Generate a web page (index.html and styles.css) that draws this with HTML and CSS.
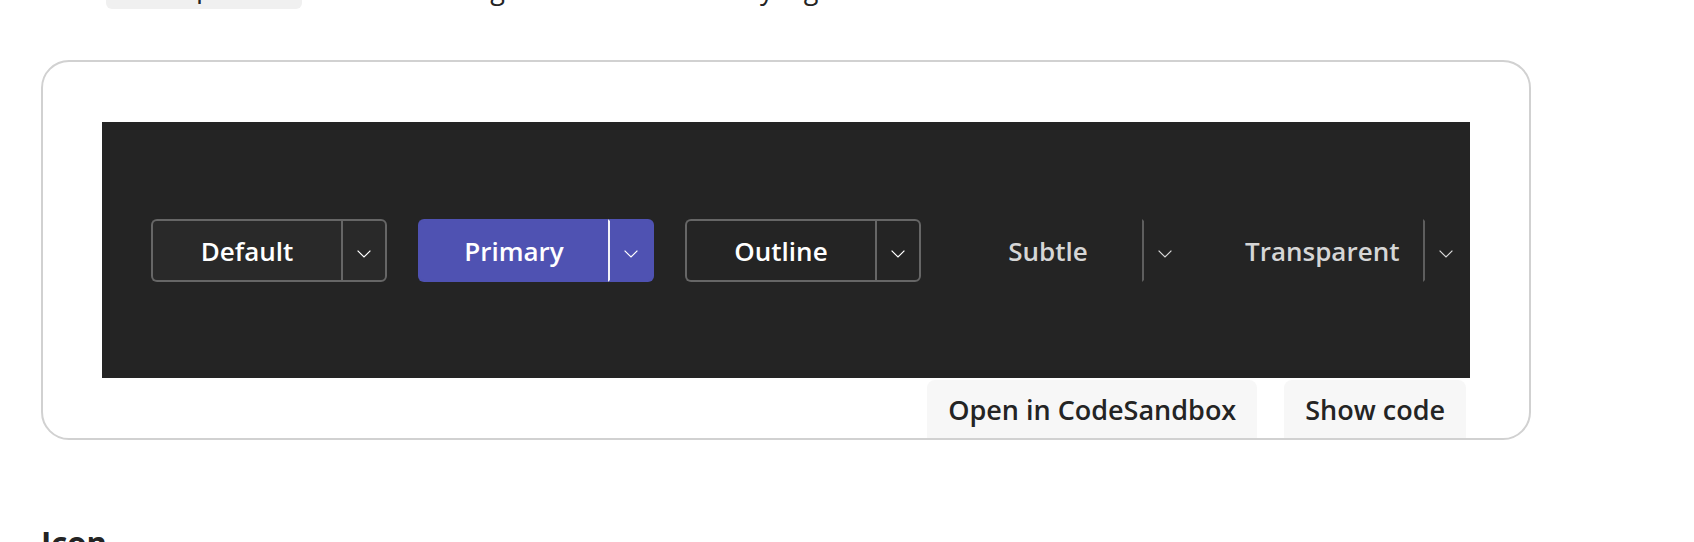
FILE: index.html
```html
<!DOCTYPE html>
<html lang="en">
<head>
<meta charset="utf-8">
<title>Split button appearance</title>
<link rel="stylesheet" href="styles.css">
</head>
<body>
<div class="page">
  <ul class="intro">
    <li><code class="chip">transparent</code>: removes background and border styling.</li>
  </ul>
  <section class="card">
    <div class="preview">
      <div class="row">
        <div class="split split-default">
          <button class="main">Default</button>
          <button class="menu"><svg class="chev" width="14" height="8" viewBox="0 0 14 8"><polyline points="0.6,0.6 7,7 13.4,0.6" fill="none" stroke="currentColor" stroke-width="1.2"/></svg></button>
        </div>
        <div class="split split-primary">
          <button class="main">Primary</button>
          <button class="menu"><svg class="chev" width="14" height="8" viewBox="0 0 14 8"><polyline points="0.6,0.6 7,7 13.4,0.6" fill="none" stroke="currentColor" stroke-width="1.2"/></svg></button>
        </div>
        <div class="split split-outline">
          <button class="main">Outline</button>
          <button class="menu"><svg class="chev" width="14" height="8" viewBox="0 0 14 8"><polyline points="0.6,0.6 7,7 13.4,0.6" fill="none" stroke="currentColor" stroke-width="1.2"/></svg></button>
        </div>
        <div class="split split-subtle">
          <button class="main">Subtle</button>
          <button class="menu"><svg class="chev" width="14" height="8" viewBox="0 0 14 8"><polyline points="0.6,0.6 7,7 13.4,0.6" fill="none" stroke="currentColor" stroke-width="1.2"/></svg></button>
        </div>
        <div class="split split-transparent">
          <button class="main">Transparent</button>
          <button class="menu"><svg class="chev" width="14" height="8" viewBox="0 0 14 8"><polyline points="0.6,0.6 7,7 13.4,0.6" fill="none" stroke="currentColor" stroke-width="1.2"/></svg></button>
        </div>
      </div>
    </div>
    <div class="actions">
      <button class="action">Open in CodeSandbox</button>
      <button class="action">Show code</button>
    </div>
  </section>
  <h2 class="heading">Icon</h2>
</div>
</body>
</html>
```

FILE: styles.css
```css
html, body {
  margin: 0;
  padding: 0;
  background: #ffffff;
}

body {
  font-family: "Open Sans", "Noto Sans", sans-serif;
  color: #242424;
  overflow: hidden;
}

.page {
  display: flow-root;
  padding-left: 41px;
  width: 1490px;
}

.intro {
  margin: -31px 0 0;
  padding: 0 0 0 65px;
  font-size: 27px;
  line-height: 40px;
}

.chip {
  font-family: "Liberation Mono", monospace;
  font-size: 26px;
  line-height: 40px;
  background: #f0f0f0;
  border-radius: 6px;
  padding: 2px 12px;
}

.card {
  box-sizing: border-box;
  margin-top: 48px;
  width: 1490px;
  height: 380px;
  border: 2px solid #d1d1d1;
  border-radius: 28px;
  padding: 60px 59px 0;
  overflow: hidden;
}

.preview {
  height: 256px;
  background: #242424;
  display: flex;
  align-items: center;
  overflow: hidden;
}

.row {
  display: flex;
  gap: 31px;
  padding-left: 49px;
}

.split {
  display: flex;
  height: 63px;
}

.main {
  box-sizing: border-box;
  min-width: 190px;
  height: 100%;
  padding: 2px 24px 0;
  margin: 0;
  border: 2px solid #666666;
  border-right: 0;
  border-radius: 6px 0 0 6px;
  background: #292929;
  color: #ffffff;
  font-family: "Open Sans", "Noto Sans", sans-serif;
  font-weight: 600;
  font-size: 26px;
  line-height: 1;
  white-space: nowrap;
}

.menu {
  box-sizing: border-box;
  width: 46px;
  height: 100%;
  padding: 0;
  margin: 0;
  border: 2px solid #666666;
  border-radius: 0 6px 6px 0;
  background: #292929;
  color: #ffffff;
  display: flex;
  align-items: center;
  justify-content: center;
}

.chev {
  display: block;
  margin-top: 7px;
}

.split-primary .main {
  background: #4f52b2;
  border-color: #4f52b2;
}

.split-primary .menu {
  background: #4f52b2;
  border-color: #4f52b2;
  border-left: 2px solid #f4f4f8;
}

.split-outline .main,
.split-outline .menu {
  background: transparent;
}

.split-subtle .main,
.split-transparent .main {
  background: transparent;
  border-color: transparent;
  color: #d6d6d6;
}

.split-subtle .menu,
.split-transparent .menu {
  background: transparent;
  border-color: transparent;
  border-left-color: #5e5e5e;
  color: #d6d6d6;
}

.actions {
  display: flex;
  justify-content: flex-end;
  gap: 27px;
  margin-top: 2px;
  padding-right: 4px;
}

.action {
  margin: 0;
  border: 0;
  border-radius: 8px;
  background: #f7f7f7;
  color: #242424;
  font-family: "Open Sans", "Noto Sans", sans-serif;
  font-weight: 600;
  font-size: 27px;
  line-height: 36px;
  padding: 12px 21px 30px;
  white-space: nowrap;
}

.heading {
  margin: 81px 0 0;
  font-family: "Open Sans", "Noto Sans", sans-serif;
  font-weight: 700;
  font-size: 31px;
  line-height: normal;
  color: #242424;
}
```
